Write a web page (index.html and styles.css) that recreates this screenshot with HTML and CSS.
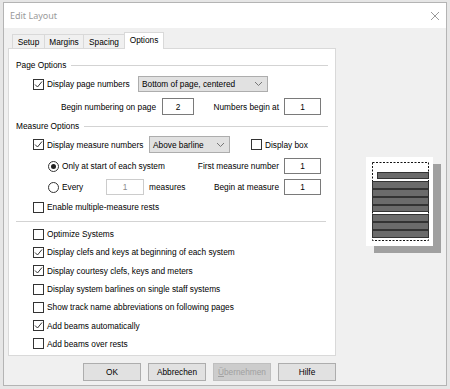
FILE: index.html
```html
<!DOCTYPE html>
<html>
<head>
<meta charset="utf-8">
<link rel="stylesheet" href="styles.css">
</head>
<body>
<div class="window">
  <div class="titlebar">
    <span class="title">Edit Layout</span>
    <svg class="close" width="8" height="8" viewBox="0 0 8 8"><path d="M0 0 L8 8 M8 0 L0 8" stroke="#9a9a9a" stroke-width="1" fill="none"/></svg>
  </div>
  <div class="client">
    <div class="left">
      <div class="tabs">
        <div class="tab w-setup">Setup</div>
        <div class="tab w-margins">Margins</div>
        <div class="tab w-spacing">Spacing</div>
        <div class="tab sel">Options</div>
      </div>
      <div class="panel">
        <div class="group g1"><span>Page Options</span><div class="gline"></div></div>

        <div class="row r1">
          <span class="cb on"><svg width="9" height="9" viewBox="0 0 9 9"><path d="M1 4.5 L3.5 7 L8 1.5" stroke="#333" stroke-width="1" fill="none"/></svg></span>
          <span class="lbl w-dpn">Display page numbers</span>
          <div class="combo c1"><span>Bottom of page, centered</span><svg width="7" height="4" viewBox="0 0 7 4"><path d="M0 0 L3.5 3.5 L7 0" stroke="#777" fill="none"/></svg></div>
        </div>

        <div class="row r2">
          <span class="rlbl w-begin">Begin numbering on page</span>
          <div class="edit e-small">2</div>
          <span class="rlbl grow">Numbers begin at</span>
          <div class="edit e-right">1</div>
        </div>

        <div class="group g2"><span>Measure Options</span><div class="gline"></div></div>

        <div class="row r3">
          <span class="cb on"><svg width="9" height="9" viewBox="0 0 9 9"><path d="M1 4.5 L3.5 7 L8 1.5" stroke="#333" stroke-width="1" fill="none"/></svg></span>
          <span class="lbl w-dmn">Display measure numbers</span>
          <div class="combo c2"><span>Above barline</span><svg width="7" height="4" viewBox="0 0 7 4"><path d="M0 0 L3.5 3.5 L7 0" stroke="#777" fill="none"/></svg></div>
          <span class="cb box-cb"></span>
          <span class="lbl">Display box</span>
        </div>

        <div class="row r4">
          <span class="radio on"></span>
          <span class="lbl">Only at start of each system</span>
          <span class="rlbl grow">First measure number</span>
          <div class="edit e-right">1</div>
        </div>

        <div class="row r5">
          <span class="radio"></span>
          <span class="lbl w-every">Every</span>
          <div class="edit e-dis">1</div>
          <span class="lbl meas">measures</span>
          <span class="rlbl grow">Begin at measure</span>
          <div class="edit e-right">1</div>
        </div>

        <div class="row r6">
          <span class="cb"></span>
          <span class="lbl">Enable multiple-measure rests</span>
        </div>

        <div class="sep"></div>

        <div class="list">
          <div class="row li"><span class="cb"></span><span class="lbl">Optimize Systems</span></div>
          <div class="row li"><span class="cb on"><svg width="9" height="9" viewBox="0 0 9 9"><path d="M1 4.5 L3.5 7 L8 1.5" stroke="#333" stroke-width="1" fill="none"/></svg></span><span class="lbl">Display clefs and keys at beginning of each system</span></div>
          <div class="row li"><span class="cb on"><svg width="9" height="9" viewBox="0 0 9 9"><path d="M1 4.5 L3.5 7 L8 1.5" stroke="#333" stroke-width="1" fill="none"/></svg></span><span class="lbl">Display courtesy clefs, keys and meters</span></div>
          <div class="row li"><span class="cb"></span><span class="lbl">Display system barlines on single staff systems</span></div>
          <div class="row li"><span class="cb"></span><span class="lbl">Show track name abbreviations on following pages</span></div>
          <div class="row li"><span class="cb on"><svg width="9" height="9" viewBox="0 0 9 9"><path d="M1 4.5 L3.5 7 L8 1.5" stroke="#333" stroke-width="1" fill="none"/></svg></span><span class="lbl">Add beams automatically</span></div>
          <div class="row li"><span class="cb"></span><span class="lbl">Add beams over rests</span></div>
        </div>
      </div>
      <div class="buttons">
        <div class="btn">OK</div>
        <div class="btn">Abbrechen</div>
        <div class="btn dis"><u>Ü</u>bernehmen</div>
        <div class="btn">Hilfe</div>
      </div>
    </div>
    <div class="preview">
      <svg width="67" height="89" viewBox="0 0 67 89">
        <rect x="6.5" y="5.5" width="56" height="78" fill="none" stroke="#111" stroke-width="1" stroke-dasharray="2 1.5"/>
        <g fill="#6b6b6b" stroke="#333" stroke-width="1">
          <rect x="11.5" y="15.5" width="51" height="6"/>
          <rect x="6.5" y="24.5" width="56" height="7"/>
          <rect x="6.5" y="32.5" width="56" height="7"/>
          <rect x="6.5" y="40.5" width="56" height="7"/>
          <rect x="6.5" y="48.5" width="56" height="6"/>
          <rect x="6.5" y="57.5" width="56" height="7"/>
          <rect x="6.5" y="65.5" width="56" height="7"/>
          <rect x="6.5" y="73.5" width="56" height="7"/>
        </g>
      </svg>
    </div>
  </div>
</div>
</body>
</html>
```

FILE: styles.css
```css
html, body {
  margin: 0;
}
body {
  padding: 2px 3px;
  background: #e6e6e6;
  font-family: "Liberation Sans", Arial, sans-serif;
  font-size: 8.3px;
  color: #000;
}
.window {
  width: 444px;
  height: 384px;
  box-sizing: border-box;
  border: 1px solid #b4b4b4;
  background: #f0f0f0;
  display: flex;
  flex-direction: column;
}
.titlebar {
  height: 25px;
  flex: none;
  background: #fff;
  display: flex;
  align-items: center;
  justify-content: space-between;
  padding: 0 7px 0 6px;
}
.title {
  font-family: "Noto Sans", "Open Sans", sans-serif;
  font-size: 9px;
  color: #9a9a9a;
}
.client {
  display: flex;
  padding: 4px 0 0 4px;
}
.left {
  width: 328px;
  display: flex;
  flex-direction: column;
}
.tabs {
  display: flex;
  align-items: flex-end;
  height: 17px;
  padding-left: 4px;
  position: relative;
  z-index: 1;
}
.tab {
  height: 14px;
  margin-bottom: 1px;
  box-sizing: border-box;
  border: 1px solid #d9d9d9;
  border-bottom: none;
  border-right: none;
  display: flex;
  align-items: center;
  justify-content: center;
  background: #f0f0f0;
}
.w-setup { width: 32px; }
.w-margins { width: 39px; }
.w-spacing { width: 41px; }
.tab.sel {
  width: 40px;
  height: 17px;
  margin-bottom: 0;
  background: #fff;
  border-right: 1px solid #d9d9d9;
  padding-bottom: 2px;
}
.panel {
  margin-top: -1px;
  height: 308px;
  box-sizing: border-box;
  border: 1px solid #d9d9d9;
  background: #fff;
  display: flex;
  flex-direction: column;
}
.group {
  display: flex;
  align-items: center;
  height: 12px;
  padding: 0 7px;
}
.g1 { margin-top: 10px; }
.g2 { margin-top: 5px; }
.gline {
  flex: 1;
  height: 1px;
  background: #d3d3d3;
  margin-left: 5px;
}
.row {
  display: flex;
  align-items: center;
  flex: none;
}
.r1 { height: 16px; margin-top: 5px; padding-left: 24px; }
.r2 { height: 17px; margin-top: 6px; padding-right: 14px; }
.r3 { height: 17px; margin-top: 4px; padding-left: 24px; }
.r4 { height: 16px; margin-top: 5px; padding-left: 39px; padding-right: 14px; }
.r5 { height: 16px; margin-top: 5px; padding-left: 39px; padding-right: 14px; }
.r6 { height: 14px; margin-top: 5px; padding-left: 24px; }
.cb {
  width: 11px;
  height: 11px;
  box-sizing: border-box;
  border: 1px solid #333;
  background: #fff;
  flex: none;
  display: flex;
}
.cb svg { display: block; }
.lbl {
  margin-left: 3px;
  white-space: nowrap;
}
.w-dpn { width: 91px; margin-left: 3px; }
.w-dmn { width: 102px; margin-left: 3px; }
.w-every { width: 44px; }
.meas { margin-left: 5px; }
.rlbl {
  white-space: nowrap;
  text-align: right;
  margin-right: 6px;
}
.w-begin { width: 147px; }
.grow { flex: 1; margin-right: 5px; }
.combo {
  height: 16px;
  box-sizing: border-box;
  border: 1px solid #adadad;
  background: #e1e1e1;
  display: flex;
  align-items: center;
  justify-content: space-between;
  padding: 0 5px 0 3px;
  flex: none;
}
.combo svg { display: block; }
.c1 { width: 130px; }
.c2 { width: 81px; height: 17px; }
.box-cb { margin-left: 21px; }
.radio {
  width: 11px;
  height: 11px;
  box-sizing: border-box;
  border: 1px solid #333;
  border-radius: 50%;
  background: #fff;
  flex: none;
  display: flex;
  align-items: center;
  justify-content: center;
}
.radio.on::after {
  content: "";
  width: 5px;
  height: 5px;
  border-radius: 50%;
  background: #222;
}
.edit {
  height: 17px;
  box-sizing: border-box;
  border: 1px solid #7a7a7a;
  background: #fff;
  display: flex;
  align-items: center;
  justify-content: center;
  flex: none;
}
.r4 .edit, .r5 .edit { height: 16px; }
.e-small { width: 32px; }
.e-right { width: 37px; }
.e-dis {
  width: 38px;
  border-color: #cccccc;
  color: #8a8a8a;
  background: #fff;
}
.sep {
  margin: 7px 9px 0 7px;
  height: 1px;
  background: #d3d3d3;
  flex: none;
}
.list {
  margin-top: 3px;
  display: flex;
  flex-direction: column;
}
.li {
  height: 18.3px;
  padding-left: 24px;
}
.buttons {
  display: flex;
  justify-content: flex-end;
  gap: 7px;
  margin-top: 7px;
}
.btn {
  width: 58px;
  height: 18px;
  box-sizing: border-box;
  border: 1px solid #adadad;
  background: #e1e1e1;
  display: flex;
  align-items: center;
  justify-content: center;
}
.btn.dis {
  background: #cccccc;
  border-color: #bfbfbf;
  color: #a0a0a0;
}
.btn u { text-decoration: underline; }
.preview {
  margin-left: 30px;
  margin-top: 125px;
  width: 67px;
  height: 89px;
  background: #fff;
  box-shadow: 8px 7px 0 #a0a0a0;
}
.preview svg { display: block; }
```
